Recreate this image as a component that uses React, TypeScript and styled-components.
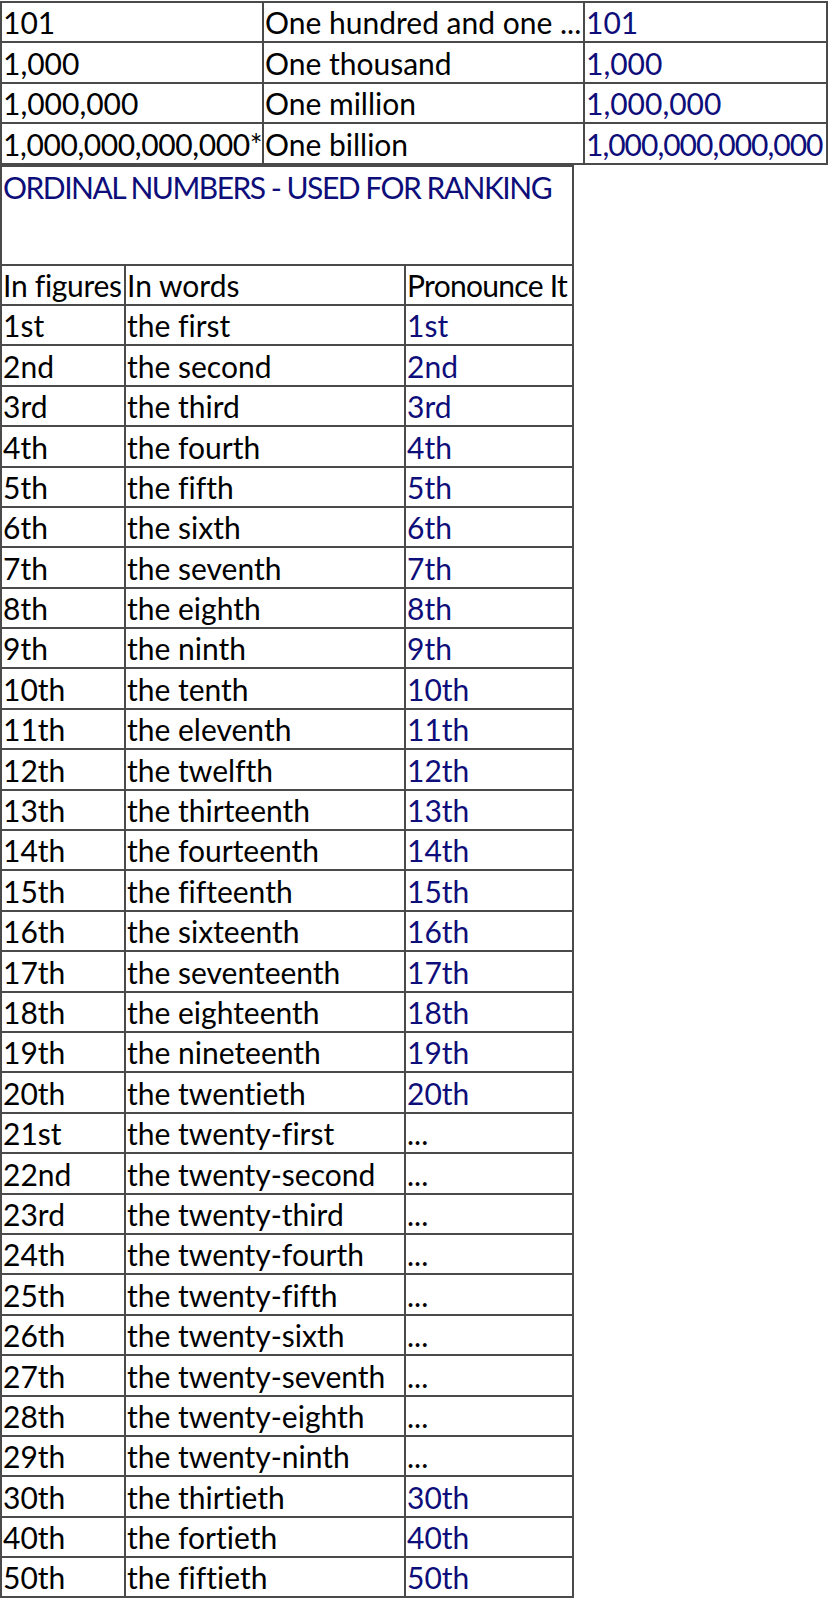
import React from 'react';
import styled, { createGlobalStyle } from 'styled-components';

const GlobalStyle = createGlobalStyle`
  html, body {
    margin: 0;
    padding: 0;
    background: #ffffff;
  }
  body {
    font-family: Lato, 'Open Sans', 'Liberation Sans', sans-serif;
    font-variant-ligatures: none;
    font-feature-settings: 'liga' 0, 'clig' 0;
  }
`;

const Sheet = styled.div`
  display: flex;
  flex-direction: column;
  align-items: flex-start;
  padding-top: 1px;
`;

const Grid = styled.div<{ $cols: string }>`
  display: grid;
  grid-template-columns: ${(p) => p.$cols};
  grid-auto-rows: 40.4px;
  border-top: 2px solid #4a4a4a;
  border-left: 2px solid #4a4a4a;
`;

const OrdinalGrid = styled(Grid)`
  grid-template-rows: 99px;
`;

// $squeeze: letter-spacing in px for texts that fill their cell to the edge
const Cell = styled.div<{ $blue?: boolean; $squeeze?: number }>`
  box-sizing: border-box;
  display: flex;
  align-items: flex-end;
  border-right: 2px solid #4a4a4a;
  border-bottom: 2px solid #4a4a4a;
  padding: 0 0 4px 1px;
  font-size: 30px;
  line-height: 30px;
  letter-spacing: ${(p) => (p.$squeeze ? `${p.$squeeze}px` : 'normal')};
  white-space: nowrap;
  overflow: hidden;
  color: ${(p) => (p.$blue ? '#0e0e7a' : '#000000')};
`;

const TitleCell = styled.div`
  box-sizing: border-box;
  grid-column: 1 / -1;
  border-right: 2px solid #4a4a4a;
  border-bottom: 2px solid #4a4a4a;
  padding: 5px 0 0 1px;
  font-size: 30px;
  line-height: 30px;
  letter-spacing: -1.5px;
  white-space: nowrap;
  color: #0e0e7a;
`;

const cardinals = [
  ['101', 'One hundred and one ...', '101'],
  ['1,000', 'One thousand', '1,000'],
  ['1,000,000', 'One million', '1,000,000'],
  ['1,000,000,000,000*', 'One billion', '1,000,000,000,000'],
];

const words = [
  'first', 'second', 'third', 'fourth', 'fifth', 'sixth', 'seventh', 'eighth',
  'ninth', 'tenth', 'eleventh', 'twelfth', 'thirteenth', 'fourteenth',
  'fifteenth', 'sixteenth', 'seventeenth', 'eighteenth', 'nineteenth',
  'twentieth', 'twenty-first', 'twenty-second', 'twenty-third',
  'twenty-fourth', 'twenty-fifth', 'twenty-sixth', 'twenty-seventh',
  'twenty-eighth', 'twenty-ninth',
];

const suffix = (n: number) => {
  if (n % 100 >= 11 && n % 100 <= 13) return 'th';
  if (n % 10 === 1) return 'st';
  if (n % 10 === 2) return 'nd';
  if (n % 10 === 3) return 'rd';
  return 'th';
};

const ordinals = [
  ...words.map((w, i) => {
    const n = i + 1;
    const fig = `${n}${suffix(n)}`;
    return { fig, word: `the ${w}`, say: n > 20 ? '...' : fig };
  }),
  { fig: '30th', word: 'the thirtieth', say: '30th' },
  { fig: '40th', word: 'the fortieth', say: '40th' },
  { fig: '50th', word: 'the fiftieth', say: '50th' },
];

const App = () => (
  <>
    <GlobalStyle />
    <Sheet>
      <Grid $cols="262px 321px 243px">
        {cardinals.map(([a, b, c]) => (
          <React.Fragment key={a}>
            <Cell $squeeze={a.length > 12 ? -0.4 : 0}>{a}</Cell>
            <Cell>{b}</Cell>
            <Cell $blue $squeeze={c.length > 12 ? -1 : 0}>{c}</Cell>
          </React.Fragment>
        ))}
      </Grid>
      <OrdinalGrid $cols="124px 280px 168px">
        <TitleCell>ORDINAL NUMBERS - USED FOR RANKING</TitleCell>
        <Cell $squeeze={-0.3}>In figures</Cell>
        <Cell>In words</Cell>
        <Cell $squeeze={-0.7}>Pronounce It</Cell>
        {ordinals.map((o) => (
          <React.Fragment key={o.fig}>
            <Cell>{o.fig}</Cell>
            <Cell>{o.word}</Cell>
            <Cell $blue={o.say !== '...'}>{o.say}</Cell>
          </React.Fragment>
        ))}
      </OrdinalGrid>
    </Sheet>
  </>
);

export default App;
